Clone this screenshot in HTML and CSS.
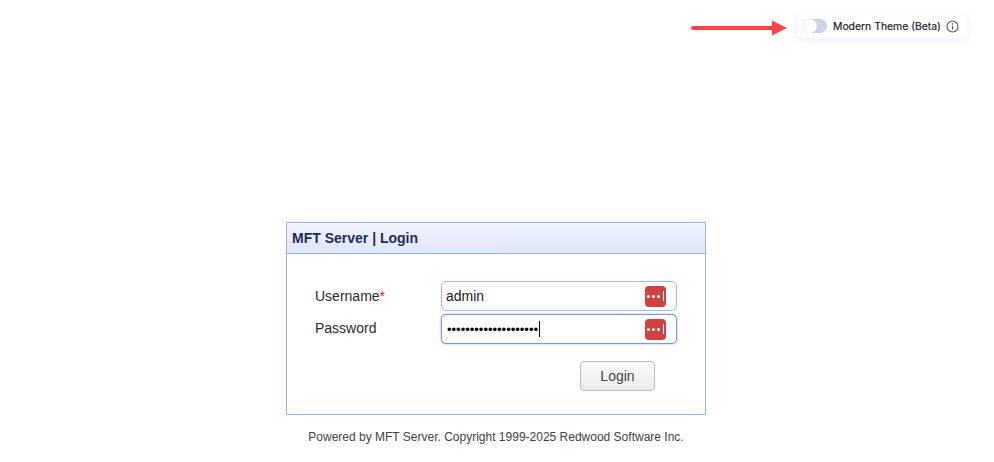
FILE: index.html
```html
<!DOCTYPE html>
<html lang="en">
<head>
<meta charset="utf-8">
<title>MFT Server | Login</title>
<link rel="stylesheet" href="styles.css">
</head>
<body>
<svg class="arrow" width="100" height="20" viewBox="0 0 100 20" aria-hidden="true">
  <path d="M2 10H84" stroke="#ff4343" stroke-width="4" stroke-linecap="round"/>
  <path d="M81 2.500L96 10L81 17.500Z" fill="#ff4343"/>
</svg>
<div class="theme-pill">
  <span class="switch"><span class="knob"></span></span>
  <span class="theme-label">Modern Theme (Beta)</span>
  <svg class="info" width="13" height="13" viewBox="0 0 13 13" aria-hidden="true">
    <circle cx="6.500" cy="6.500" r="5.500" fill="none" stroke="#4d5560" stroke-width="1.100"/>
    <circle cx="6.500" cy="4" r=".8" fill="#4d5560"/>
    <path d="M6.500 5.800V9.600" stroke="#4d5560" stroke-width="1.200"/>
  </svg>
</div>
<main class="page">
  <section class="card">
    <h1 class="card-title">MFT Server | Login</h1>
    <form class="card-body">
      <div class="row">
        <span class="label">Username<span class="req">*</span></span>
        <div class="field"><span class="value">admin</span>
          <span class="key"><span class="dots"></span><span class="dots"></span><span class="dots"></span><span class="bar"></span></span>
        </div>
      </div>
      <div class="row">
        <span class="label label-raised">Password</span>
        <div class="field focused"><span class="value secret">••••••••••••••••••••</span><span class="caret"></span>
          <span class="key"><span class="dots"></span><span class="dots"></span><span class="dots"></span><span class="bar"></span></span>
        </div>
      </div>
      <div class="actions"><button type="button" class="login">Login</button></div>
    </form>
  </section>
  <p class="footer">Powered by MFT Server. Copyright 1999-2025 Redwood Software Inc.</p>
</main>
</body>
</html>
```

FILE: styles.css
```css
html, body { margin: 0; padding: 0; background: #fff; }
body { font-family: "Liberation Sans", Arial, sans-serif; color: #222; position: relative; height: 462px; overflow: hidden; }

.arrow { position: absolute; left: 691px; top: 18px; }

.theme-pill {
  position: absolute; left: 797px; top: 14px; width: 170px; height: 24px;
  box-sizing: border-box; padding: 0 8px 0 6px;
  display: flex; align-items: center;
  background: #fff; border-radius: 6px;
  box-shadow: 0 2px 10px rgba(120, 130, 170, .14);
}
.switch { width: 24px; height: 14px; border-radius: 7px; background: #ccd4ea; display: block; flex: none; }
.knob { display: block; width: 14px; height: 14px; border-radius: 50%; background: #fff; box-shadow: 0 0 1px rgba(120,130,170,.3); }
.theme-label { margin-left: 6px; font-family: Inter, sans-serif; font-size: 10.400px; color: #10172a; white-space: nowrap; -webkit-text-stroke: .15px #10172a; }
.info { margin-left: auto; flex: none; }

.page { padding: 222px 2px 0 0; display: flex; flex-direction: column; align-items: center; }
.card { width: 420px; height: 193px; box-sizing: border-box; border: 1px solid #9db3e6; }
.card-title {
  margin: 0; height: 31px; box-sizing: border-box; padding: 0 5px; line-height: 30px;
  font-size: 14px; font-weight: 700; color: #1f2a5c;
  background: linear-gradient(#f1f4fd, #dfe7fb);
  border-bottom: 1px solid #9db3e6;
}
.card-body { padding: 27px 28px 0 28px; }
.row { display: flex; align-items: center; height: 30px; margin-bottom: 3px; }
.label { width: 126px; font-size: 14px; color: #2b2b2b; }
.label-raised { margin-bottom: 2px; }
.req { color: #e0102c; }
.field {
  width: 236px; height: 30px; box-sizing: border-box; display: flex; align-items: center;
  padding: 0 4px 0 4px; background: #fff;
  border: 1px solid #a3b8ea; border-radius: 5px; color: #222;
}
.field.focused { border-color: #7b96e2; box-shadow: 0 0 2px rgba(90, 125, 225, .7); }
.value { font-size: 14px; }
.secret { font-size: 13px; color: #000; margin-left: 1px; }
.caret { width: 1px; height: 16px; margin-left: 1px; background: #000; }
.key {
  margin-left: auto; margin-right: 6px; width: 21px; height: 21px; border-radius: 4px; background: #cf4240;
  display: flex; align-items: center; justify-content: center; gap: 2px; flex: none;
}
.dots { width: 3px; height: 3px; border-radius: 50%; background: #fff; }
.bar { width: 1px; height: 10px; background: #fff; margin-left: 1px; }

.actions { display: flex; justify-content: flex-end; padding: 14px 22px 0 0; }
.login {
  width: 75px; height: 30px; padding: 0; font: 14px "Liberation Sans", Arial, sans-serif; color: #444;
  background: linear-gradient(#fbfbfb, #ebebeb); border: 1px solid #bbb; border-radius: 4px;
}
.footer { margin: 15px 0 0; font-size: 12px; line-height: 14px; color: #444; text-align: center; }
```
